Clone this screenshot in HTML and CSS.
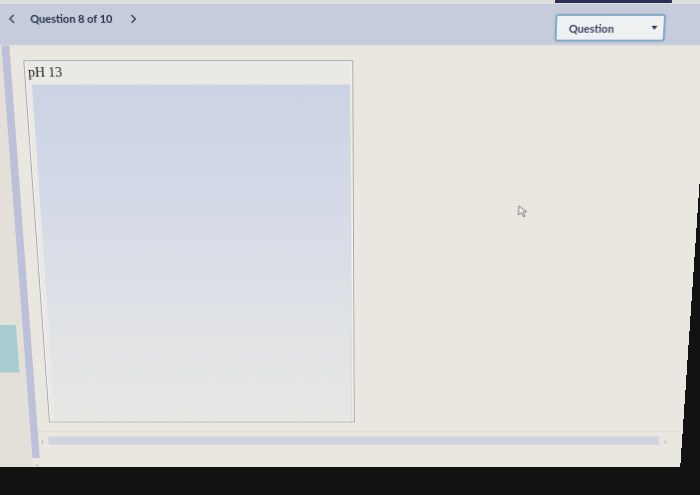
FILE: index.html
```html
<!DOCTYPE html>
<html>
<head>
<meta charset="utf-8">
<link rel="stylesheet" href="styles.css">
</head>
<body>
<div class="screen">
  <div class="topstrip"><div class="darkbar"></div></div>
  <div class="header">
    <div class="nav">
      <svg class="chev" width="7" height="10" viewBox="0 0 7 10"><polyline points="5.5,1 1.5,5 5.5,9" fill="none" stroke="#34415f" stroke-width="1.4"/></svg>
      <span class="qtitle">Question 8 of 10</span>
      <svg class="chev next" width="7" height="10" viewBox="0 0 7 10"><polyline points="1.5,1 5.5,5 1.5,9" fill="none" stroke="#34415f" stroke-width="1.4"/></svg>
    </div>
    <div class="dropdown">
      <span>Question</span>
      <span class="tri"></span>
    </div>
  </div>
  <div class="main">
    <div class="rail"><div class="teal"></div></div>
    <div class="vscroll"><span class="vdown">&#8964;</span></div>
    <div class="content">
      <div class="box">
        <div class="label">pH 13</div>
        <div class="area"></div>
      </div>
      <div class="sep"></div>
      <div class="hscroll">
        <span class="harrow">&lsaquo;</span>
        <div class="track"></div>
        <span class="harrow">&rsaquo;</span>
      </div>
    </div>
  </div>
  <svg class="cursor" width="12" height="14" viewBox="0 0 12 14"><path d="M1 1 L1 11 L4 8.5 L6.5 13 L8 12.3 L5.7 7.8 L9.5 7.5 Z" fill="#eeeeec" stroke="#7a7a80" stroke-width="1"/></svg>
</div>
</body>
</html>
```
FILE: styles.css
```css
html, body { margin: 0; padding: 0; }
body { background: #121212; width: 700px; height: 495px; overflow: hidden; }
.screen {
  position: relative;
  margin-left: -60px;
  width: 772px;
  height: 516px;
  background: #e9e7df;
  display: flex;
  flex-direction: column;
  font-family: Lato, "Open Sans", "Liberation Sans", sans-serif;
  transform-origin: 433px 0;
  transform: perspective(250px) rotateX(-2.87deg);
}
.topstrip {
  height: 4px;
  background: #dfe0de;
  display: flex;
  justify-content: flex-end;
  padding-right: 40px;
}
.darkbar { width: 117px; height: 3px; background: #2c2f58; }
.header {
  height: 41px;
  background: #c6ccdc;
  display: flex;
  justify-content: space-between;
  align-items: flex-start;
  padding: 0 45px 0 67px;
  border-bottom: 1px solid #d3d7df;
}
.nav {
  display: flex;
  align-items: center;
  margin-top: 8px;
  color: #27324f;
}
.chev { display: block; }
.qtitle { font-size: 11px; font-weight: 700; margin-left: 15px; line-height: 14px; }
.next { margin-left: 18px; }
.dropdown {
  margin-top: 10px;
  width: 89px;
  height: 24px;
  background: #eef0f2;
  border: 2px solid #86a9c6;
  border-radius: 3px;
  box-shadow: 0 0 2px #9bb8d0;
  display: flex;
  align-items: center;
  justify-content: space-between;
  padding: 0 6px 0 12px;
  font-size: 11px;
  font-weight: 700;
  color: #3b4260;
}
.tri {
  width: 0; height: 0;
  border-left: 3.5px solid transparent;
  border-right: 3.5px solid transparent;
  border-top: 4px solid #2b3553;
}
.main { flex: 1; display: flex; }
.rail { width: 58px; background: #e2e0d9; display: flex; flex-direction: column; }
.teal { margin-top: 302px; width: 51px; height: 55px; background: #a8cdd1; }
.vscroll {
  width: 8px;
  background: #bcc0d9;
  margin-right: 1px;
  margin-bottom: 11px;
  position: relative;
}
.vdown { position: absolute; bottom: -12px; left: 1px; font-size: 8px; color: #888; }
.content { flex: 1; display: flex; flex-direction: column; }
.box {
  margin-top: 15px;
  margin-left: 12px;
  width: 334px;
  height: 401px;
  box-sizing: border-box;
  border: 1px solid #a7a8b6;
  box-shadow: inset 0 0 0 1px #f3f3f1;
  padding: 2px 2px 2px 6px;
  display: flex;
  flex-direction: column;
  background: #ebe9e3;
}
.label {
  font-family: "Liberation Serif", "DejaVu Serif", serif;
  font-size: 14px;
  color: #1f1f24;
  height: 22px;
  line-height: 19px;
  margin-left: -3px;
}
.area {
  flex: 1;
  background: linear-gradient(#cbd3e4, #d6dbe7 40%, #e1e3e5 75%, #e6e6e3);
  border-right: 1px solid #d9dadc;
}
.sep { margin-top: 10px; height: 1px; background: #d8d8d5; }
.hscroll {
  margin-top: 5px;
  display: flex;
  align-items: center;
  gap: 5px;
  padding-left: 2px;
  padding-right: 17px;
  height: 11px;
}
.harrow { font-size: 10px; color: #8a8a8a; line-height: 10px; }
.track { flex: 1; height: 10px; background: #cfd4df; }
.cursor { position: absolute; left: 584px; top: 214px; }
```
